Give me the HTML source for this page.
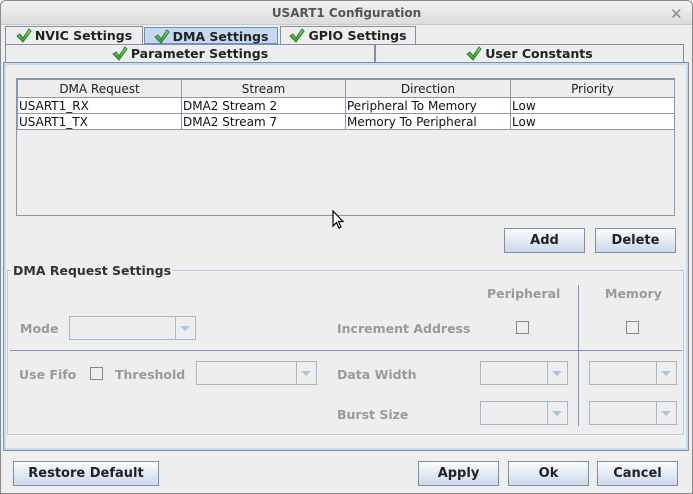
<!DOCTYPE html>
<html><head><meta charset="utf-8"><style>
*{box-sizing:border-box;margin:0;padding:0}
body{width:693px;height:494px;overflow:hidden;background:#eeeeee;font-family:"DejaVu Sans","Liberation Sans",sans-serif;position:relative}
.a{position:absolute}
.win{left:0;top:0;width:693px;height:494px;border:1px solid #8a8a8a;border-radius:6px 6px 0 0;background:#eeeeee}
.title{left:1px;top:1px;width:691px;height:24px;background:linear-gradient(#f2f2f2,#dcdcdc);border-radius:5px 5px 0 0;border-bottom:1px solid #c8c8c8;font-size:12px;font-weight:bold;color:#555;text-align:center;line-height:24px}
.tab{border:1px solid #7f8fa6;border-bottom:none;background:#eeeeee;font-size:12.5px;font-weight:bold;color:#222;text-align:center;line-height:18px;white-space:nowrap}
.tab svg{vertical-align:-3px;margin-right:3px}
.sel{background:#c5d8ef;border:1px solid #6f8fc8}
.panel{left:3px;top:62px;width:686px;height:389px;border:1px solid #7f8fa6;box-shadow:inset 0 0 0 2px #c9d9ee}
table{border-collapse:collapse;font-size:12px;color:#111}
td{border:1px solid #8a98ad;height:16px;padding:0 1px;line-height:14px;white-space:nowrap}
th{border:1px solid #8a98ad;font-weight:normal;height:18px;font-size:12px;color:#222;background:#eeeeee}
.tbl{left:16px;top:78px;width:659px;height:138px;border:1px solid #8a98ad;background:#eeeeee}
.btn{border:1px solid #7f8fa6;background:linear-gradient(#fafcff,#cbd9ea);font-size:13px;font-weight:bold;color:#222;text-align:center;line-height:24px}
.lbl{font-size:12.5px;font-weight:bold;color:#9a9a9a}
.cb{width:13px;height:13px;border:1px solid #888;background:#eee}
.combo{border:1px solid #a6b6cc;background:#eee;height:24px}
.combo:after{content:"";position:absolute;right:0;top:0;width:19px;height:22px;border-left:1px solid #a6b6cc}
.combo i{position:absolute;right:5px;top:9px;width:0;height:0;border-left:5px solid transparent;border-right:5px solid transparent;border-top:5px solid #a8c4e4}
</style></head><body>
<div class="a win"></div>
<div class="a title">USART1 Configuration</div>
<div class="a" style="left:670px;top:5px;font-size:15px;color:#888;font-weight:bold">✕</div>

<svg width="0" height="0" style="position:absolute"><defs><linearGradient id="g" x1="0" y1="0" x2="0" y2="1"><stop offset="0" stop-color="#8ee08a"/><stop offset="1" stop-color="#2c9a2c"/></linearGradient></defs></svg>

<div class="a tab" style="left:5px;top:26px;width:138px;height:18px"><svg width="16" height="15" viewBox="0 0 16 15"><path d="M1 8 L4 6 L7 10 L13 1 L15 3 L7 14 Z" fill="url(#g)" stroke="#2b7d2b" stroke-width="1"/></svg>NVIC Settings</div>
<div class="a tab sel" style="left:144px;top:27px;width:134px;height:17px;line-height:17px"><svg width="16" height="15" viewBox="0 0 16 15"><path d="M1 8 L4 6 L7 10 L13 1 L15 3 L7 14 Z" fill="url(#g)" stroke="#2b7d2b" stroke-width="1"/></svg>DMA Settings</div>
<div class="a tab" style="left:280px;top:26px;width:136px;height:18px"><svg width="16" height="15" viewBox="0 0 16 15"><path d="M1 8 L4 6 L7 10 L13 1 L15 3 L7 14 Z" fill="url(#g)" stroke="#2b7d2b" stroke-width="1"/></svg>GPIO Settings</div>
<div class="a tab" style="left:5px;top:44px;width:370px;height:18px"><svg width="16" height="15" viewBox="0 0 16 15"><path d="M1 8 L4 6 L7 10 L13 1 L15 3 L7 14 Z" fill="url(#g)" stroke="#2b7d2b" stroke-width="1"/></svg>Parameter Settings</div>
<div class="a tab" style="left:375px;top:44px;width:309px;height:18px"><svg width="16" height="15" viewBox="0 0 16 15"><path d="M1 8 L4 6 L7 10 L13 1 L15 3 L7 14 Z" fill="url(#g)" stroke="#2b7d2b" stroke-width="1"/></svg>User Constants</div>

<div class="a panel"></div>
<div class="a tbl">
<table style="width:658px">
<tr><th style="width:164px">DMA Request</th><th style="width:164px">Stream</th><th style="width:165px">Direction</th><th>Priority</th></tr>
<tr style="background:#fff"><td>USART1_RX</td><td>DMA2 Stream 2</td><td>Peripheral To Memory</td><td>Low</td></tr>
<tr style="background:#fff"><td>USART1_TX</td><td>DMA2 Stream 7</td><td>Memory To Peripheral</td><td>Low</td></tr>
</table></div>

<svg class="a" style="left:332px;top:210px" width="14" height="20" viewBox="0 0 14 20"><path d="M1 1 L1 16 L4.5 12.5 L7 18 L9 17 L6.5 11.5 L11 11.5 Z" fill="#fff" stroke="#000" stroke-width="1.2"/></svg>

<div class="a btn" style="left:504px;top:228px;width:81px;height:25px">Add</div>
<div class="a btn" style="left:595px;top:228px;width:81px;height:25px">Delete</div>

<div class="a" style="left:7px;top:270px;width:677px;height:165px;border:1px solid #b8cde6"></div>
<div class="a" style="left:11px;top:263px;background:#eee;padding:0 2px;font-size:12.5px;font-weight:bold;color:#333">DMA Request Settings</div>
<div class="a lbl" style="left:487px;top:286px">Peripheral</div>
<div class="a lbl" style="left:605px;top:286px">Memory</div>
<div class="a" style="left:578px;top:285px;width:1px;height:141px;background:#7f93bf"></div>
<div class="a" style="left:10px;top:350px;width:672px;height:1px;background:#7f93bf"></div>
<div class="a lbl" style="left:20px;top:321px">Mode</div>
<div class="a combo" style="left:69px;top:316px;width:127px"><i></i></div>
<div class="a lbl" style="left:337px;top:321px">Increment Address</div>
<div class="a cb" style="left:516px;top:321px"></div>
<div class="a cb" style="left:626px;top:321px"></div>
<div class="a lbl" style="left:19px;top:367px">Use Fifo</div>
<div class="a cb" style="left:90px;top:367px"></div>
<div class="a lbl" style="left:115px;top:367px">Threshold</div>
<div class="a combo" style="left:196px;top:361px;width:121px"><i></i></div>
<div class="a lbl" style="left:337px;top:367px">Data Width</div>
<div class="a combo" style="left:480px;top:361px;width:88px"><i></i></div>
<div class="a combo" style="left:589px;top:361px;width:88px"><i></i></div>
<div class="a lbl" style="left:337px;top:407px">Burst Size</div>
<div class="a combo" style="left:480px;top:401px;width:88px"><i></i></div>
<div class="a combo" style="left:589px;top:401px;width:88px"><i></i></div>

<div class="a btn" style="left:13px;top:461px;width:146px;height:25px">Restore Default</div>
<div class="a btn" style="left:418px;top:461px;width:81px;height:25px">Apply</div>
<div class="a btn" style="left:508px;top:461px;width:81px;height:25px">Ok</div>
<div class="a btn" style="left:597px;top:461px;width:81px;height:25px">Cancel</div>
</body></html>
